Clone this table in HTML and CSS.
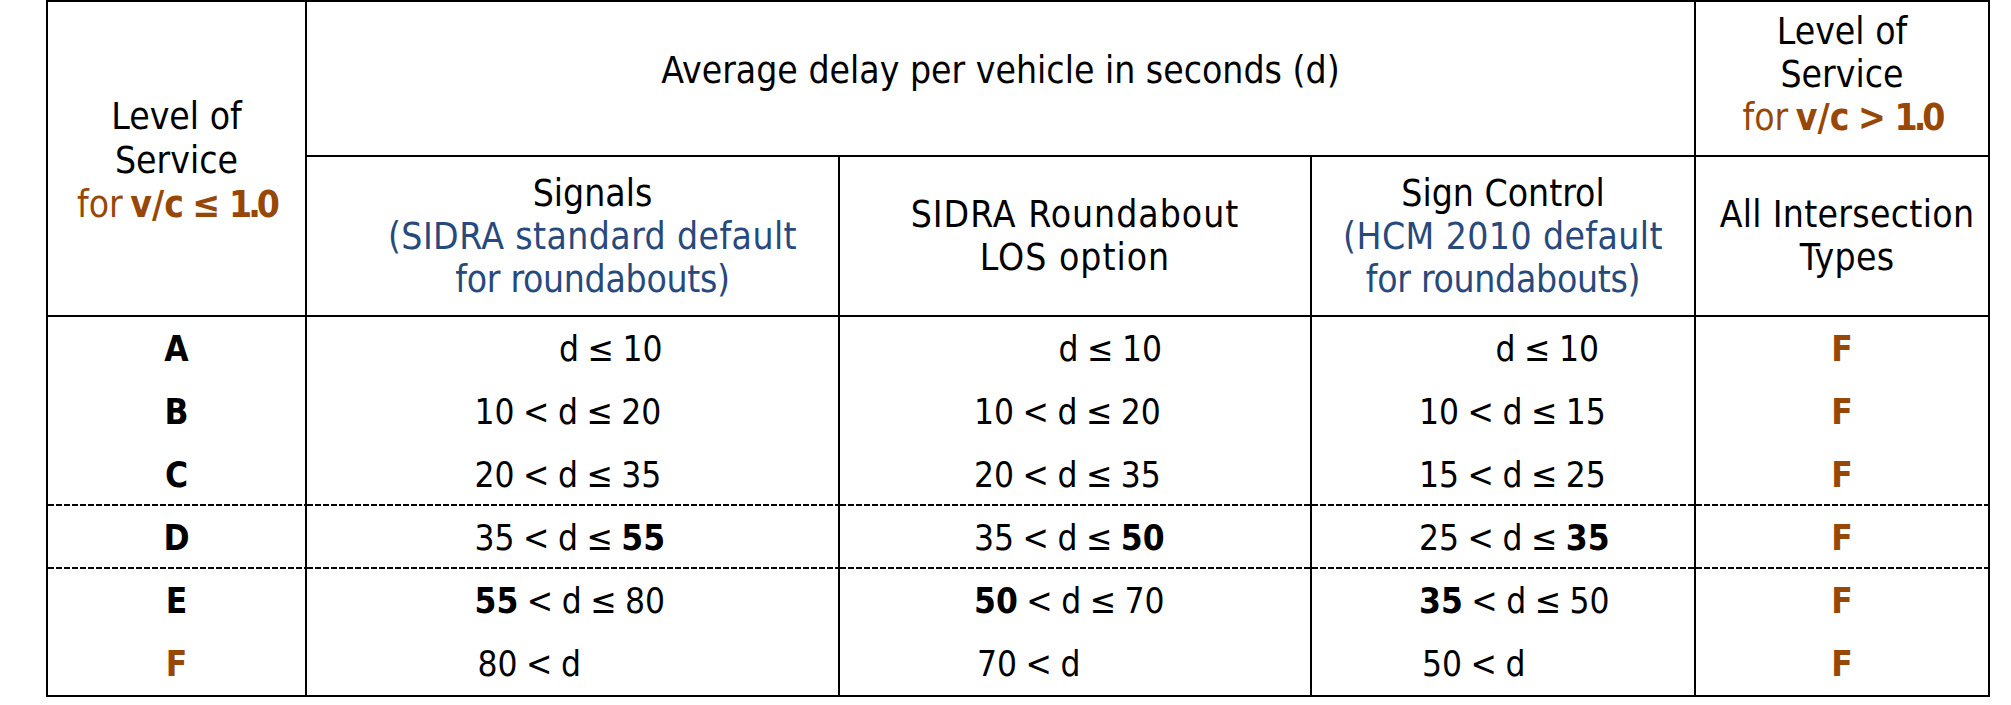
FILE: index.html
```html
<!DOCTYPE html>
<html lang="en">
<head>
<meta charset="utf-8">
<title>Level of Service</title>
<link rel="stylesheet" href="styles.css">
</head>
<body>
<div class="los">
  <div class="cell hd rs2 first"><div class="in">Level of<br>Service<br><span class="brown vc">for <b>v/c ≤ <span class="num">1.0</span></b></span></div></div>
  <div class="cell hd cs3 avg"><div class="in">Average delay per vehicle in seconds (d)</div></div>
  <div class="cell hd over"><div class="in">Level of<br>Service<br><span class="brown vc">for <b>v/c &gt; <span class="num">1.0</span></b></span></div></div>
  <div class="cell hd sig"><div class="in">Signals<br><span class="blue b1">(SIDRA standard default</span><br><span class="blue b2">for roundabouts)</span></div></div>
  <div class="cell hd wide"><div class="in">SIDRA Roundabout<br>LOS option</div></div>
  <div class="cell hd"><div class="in">Sign Control<br><span class="blue b1">(HCM 2010 default</span><br><span class="blue b2">for roundabouts)</span></div></div>
  <div class="cell hd allt"><div class="in">All Intersection<br>Types</div></div>

  <div class="cell lt">A</div>
  <div class="cell c2"><span class="v r">d ≤ 10</span></div>
  <div class="cell c3"><span class="v r">d ≤ 10</span></div>
  <div class="cell c4"><span class="v r s">d ≤ 10</span></div>
  <div class="cell lt brown">F</div>

  <div class="cell lt">B</div>
  <div class="cell c2"><span class="v">10 &lt; d ≤ 20</span></div>
  <div class="cell c3"><span class="v">10 &lt; d ≤ 20</span></div>
  <div class="cell c4"><span class="v">10 &lt; d ≤ 15</span></div>
  <div class="cell lt brown">F</div>

  <div class="cell lt dash">C</div>
  <div class="cell c2 dash"><span class="v">20 &lt; d ≤ 35</span></div>
  <div class="cell c3 dash"><span class="v">20 &lt; d ≤ 35</span></div>
  <div class="cell c4 dash"><span class="v">15 &lt; d ≤ 25</span></div>
  <div class="cell lt brown dash">F</div>

  <div class="cell lt dash">D</div>
  <div class="cell c2 dash"><span class="v">35 &lt; d ≤ <b>55</b></span></div>
  <div class="cell c3 dash"><span class="v">35 &lt; d ≤ <b>50</b></span></div>
  <div class="cell c4 dash"><span class="v">25 &lt; d ≤ <b>35</b></span></div>
  <div class="cell lt brown dash">F</div>

  <div class="cell lt">E</div>
  <div class="cell c2"><span class="v"><b>55</b> &lt; d ≤ 80</span></div>
  <div class="cell c3"><span class="v"><b>50</b> &lt; d ≤ 70</span></div>
  <div class="cell c4"><span class="v"><b>35</b> &lt; d ≤ 50</span></div>
  <div class="cell lt brown">F</div>

  <div class="cell lt brown">F</div>
  <div class="cell c2"><span class="v last">80 &lt; d</span></div>
  <div class="cell c3"><span class="v last">70 &lt; d</span></div>
  <div class="cell c4"><span class="v last">50 &lt; d</span></div>
  <div class="cell lt brown">F</div>
</div>
</body>
</html>
```

FILE: styles.css
```css
html, body {
  margin: 0;
  padding: 0;
  background: #ffffff;
}

body {
  font-family: "DejaVu Sans Condensed", "DejaVu Sans", sans-serif;
  font-stretch: condensed;
  color: #000000;
}

.los {
  display: grid;
  grid-template-columns: 259px 533px 472px 384px 294px;
  grid-template-rows: 155px 160px repeat(6, 63px);
  width: max-content;
  margin-left: 46px;
  border: 2px solid #000000;
  border-right: 0;
}

.cell {
  box-sizing: border-box;
  border-right: 2px solid #000000;
  display: flex;
  align-items: center;
  justify-content: center;
  text-align: center;
}

.in {
  text-align: center;
}

.hd {
  border-bottom: 2px solid #000000;
  font-size: 37px;
  line-height: 43px;
}

.first {
  line-height: 44px;
  padding-top: 4px;
}

.sig {
  padding-left: 40px;
}

.wide {
  letter-spacing: 1px;
}

.allt {
  letter-spacing: 0.3px;
  padding-left: 10px;
}

.rs2 {
  grid-row: span 2;
}

.cs3 {
  grid-column: span 3;
}

.avg {
  padding-bottom: 16px;
}

.over {
  padding-bottom: 8px;
}

.brown {
  color: #984806;
}

.vc {
  word-spacing: -3px;
}

.num {
  letter-spacing: -4px;
}

.blue {
  color: #27497c;
}

.b1 {
  letter-spacing: 0.4px;
}

.b2 {
  letter-spacing: -0.3px;
}

.lt {
  font-size: 35px;
  font-weight: bold;
}

.c2, .c3, .c4 {
  font-size: 35px;
}

.c2 {
  padding-right: 8px;
}

.c3 {
  padding-right: 14px;
}

.c4 {
  padding-left: 20px;
}

.v {
  display: inline-block;
  box-sizing: border-box;
  width: 188px;
  text-align: left;
  white-space: nowrap;
  word-spacing: -1.5px;
}

.v.r {
  text-align: right;
}

.v.s {
  padding-right: 8px;
}

.v.last {
  padding-left: 3px;
}

.dash {
  background-image: repeating-linear-gradient(to right, #000000 0 6px, transparent 6px 8px);
  background-size: 100% 2px;
  background-position: left bottom;
  background-repeat: no-repeat;
}
```
